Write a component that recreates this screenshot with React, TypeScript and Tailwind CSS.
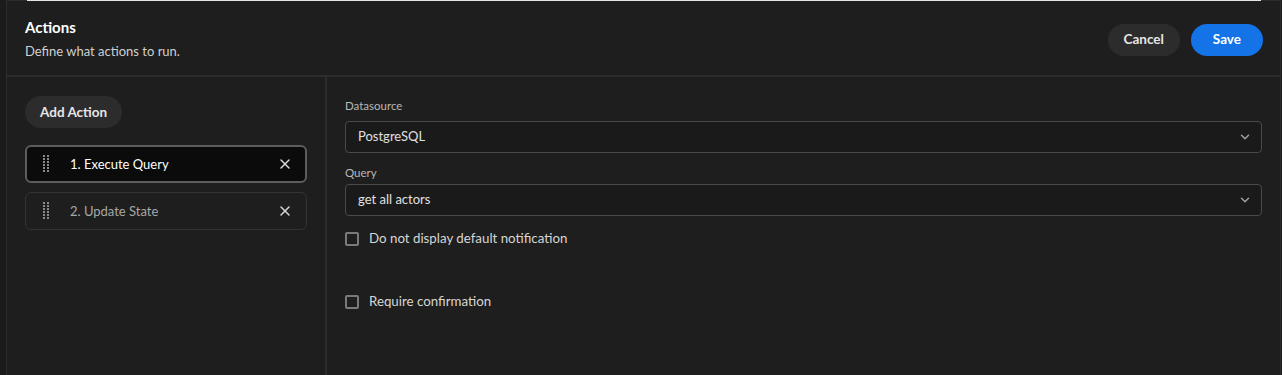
import { ChevronDown, X } from 'lucide-react';

const DragHandle = () => (
  <svg width="6" height="18" viewBox="0 0 6 18" className="text-[#8a8a8a]">
    {[0, 1, 2, 3, 4, 5].map((r) =>
      [0, 1].map((c) => (
        <rect key={`${r}-${c}`} x={c * 4} y={r * 3} width="2" height="2" fill="currentColor" />
      ))
    )}
  </svg>
);

const ActionItem = ({ label, active }: { label: string; active?: boolean }) => (
  <div
    className={
      active
        ? 'flex items-center h-[38px] rounded-md border-2 border-[#5c5c5c] bg-[#0b0b0b] pl-[16px] pr-[12px]'
        : 'flex items-center h-[38px] rounded-md border border-[#333333] bg-[#1e1e1e] pl-[17px] pr-[13px]'
    }
  >
    <DragHandle />
    <span
      className={
        active
          ? 'ml-[21px] flex-1 pt-[2px] text-[13px] text-white'
          : 'ml-[21px] flex-1 pt-[2px] text-[13px] text-[#a8a8a8]'
      }
    >
      {label}
    </span>
    <X className="w-[16px] h-[16px] text-[#d8d8d8]" strokeWidth={2.2} />
  </div>
);

const Select = ({ value }: { value: string }) => (
  <div className="flex items-center h-[32px] rounded-[4px] border border-[#4a4a4a] bg-[#1a1a1a] pl-[12px] pr-[9px]">
    <span className="flex-1 text-[13px] text-[#e0e0e0]">{value}</span>
    <ChevronDown className="w-[14px] h-[14px] text-[#a0a0a0]" strokeWidth={2.5} />
  </div>
);

const Checkbox = ({ label }: { label: string }) => (
  <label className="flex items-center gap-[10px]">
    <span className="w-[14px] h-[14px] rounded-[2px] border-2 border-[#7a7a7a]" />
    <span className="text-[13.3px] text-[#d6d6d6]">{label}</span>
  </label>
);

const App = () => {
  return (
    <div
      className="h-[375px] w-[1282px] overflow-hidden bg-[#1b1b1b] pl-[6px] pr-[1px]"
      style={{ fontFamily: 'Lato, "Noto Sans", sans-serif' }}
    >
      <div className="flex h-full flex-col border-x border-t border-[#2c2c2c] bg-[#1e1e1e]">
        {/* top highlight */}
        <div className="ml-[20px] mr-[19px] -mt-px h-px bg-[#e6e6e6]" />

        {/* Header */}
        <div className="flex items-center justify-between border-b-2 border-[#2c2c2c] pl-[18px] pr-[17px] h-[76px]">
          <div className="flex flex-col">
            <h1 className="text-[15px] font-bold leading-[18px] text-white">Actions</h1>
            <p className="mt-[7px] text-[13px] leading-[16px] text-[#d0d0d0]">Define what actions to run.</p>
          </div>
          <div className="mt-[3px] flex items-center gap-[11px]">
            <button className="h-[32px] rounded-full bg-[#2c2c2c] px-[16px] text-[13.5px] font-bold text-[#e6e6e6]">
              Cancel
            </button>
            <button className="h-[32px] rounded-full bg-[#1473e6] px-[22px] text-[13.5px] font-bold text-white">
              Save
            </button>
          </div>
        </div>

        {/* Body */}
        <div className="flex flex-1">
          {/* Left column */}
          <div className="w-[320px] border-r-2 border-[#2c2c2c] pl-[18px] pr-[18px] pt-[19px]">
            <button className="h-[32px] rounded-full bg-[#2c2c2c] px-[15px] text-[13.5px] font-bold text-[#e6e6e6]">
              Add Action
            </button>
            <div className="mt-[17px] flex flex-col gap-[9px]">
              <ActionItem label="1. Execute Query" active />
              <ActionItem label="2. Update State" />
            </div>
          </div>

          {/* Right column */}
          <div className="flex-1 pl-[18px] pr-[18px] pt-[21px]">
            <div className="text-[11.5px] leading-[16px] text-[#b8b8b8]">Datasource</div>
            <div className="mt-[7px]">
              <Select value="PostgreSQL" />
            </div>
            <div className="mt-[12px] text-[11.5px] leading-[16px] text-[#b8b8b8]">Query</div>
            <div className="mt-[3px]">
              <Select value="get all actors" />
            </div>
            <div className="mt-[13px]">
              <Checkbox label="Do not display default notification" />
            </div>
            <div className="mt-[43px]">
              <Checkbox label="Require confirmation" />
            </div>
          </div>
        </div>
      </div>
    </div>
  );
};

export default App;
